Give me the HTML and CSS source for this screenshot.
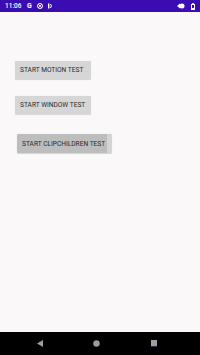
FILE: index.html
```html
<!DOCTYPE html>
<html lang="en">

<head>
  <meta charset="UTF-8" />
  <meta name="viewport" content="width=device-width, initial-scale=1.0" />
  <title>Transitions</title>
  <link rel="stylesheet" href="styles.css">
</head>

<body>
  <div class="screen">
    <header class="status-bar">
      <div class="status-left">
        <span class="clock">11:06</span>
        <span class="status-icon g-icon">G</span>
        <svg class="status-icon" width="6" height="6" viewBox="0 0 6 6">
          <circle cx="3" cy="3" r="2.5" fill="none" stroke="#fff" stroke-width="1" />
          <path d="M1 1 L5 5 M5 1 L1 5" stroke="#fff" stroke-width="0.8" />
        </svg>
        <svg class="status-icon" width="5" height="6" viewBox="0 0 5 6">
          <rect x="0" y="0.5" width="1.4" height="5" fill="#fff" />
          <path d="M2.4 1 Q4.6 3 2.4 5" fill="none" stroke="#fff" stroke-width="1" />
        </svg>
      </div>
      <div class="status-right">
        <svg width="8" height="6" viewBox="0 0 8 6">
          <path d="M0 3 L3 0.5 L3 5.5 Z" fill="#fff" />
          <circle cx="5" cy="3" r="2.5" fill="#fff" />
        </svg>
        <svg width="4" height="7" viewBox="0 0 4 7">
          <rect x="1.2" y="0" width="1.6" height="1" fill="#fff" />
          <rect x="0" y="1" width="4" height="6" fill="#fff" />
          <rect x="1" y="2" width="2" height="3" fill="#3a0cb2" />
        </svg>
      </div>
    </header>

    <main class="content">
      <button class="test-btn">Start Motion Test</button>
      <button class="test-btn">Start Window Test</button>
      <button class="test-btn clip">Start ClipChildren Test</button>
    </main>

    <footer class="nav-bar">
      <svg width="6" height="7" viewBox="0 0 6 7">
        <path d="M6 0 L6 7 L0 3.5 Z" fill="#9e9e9e" />
      </svg>
      <svg width="7" height="7" viewBox="0 0 7 7">
        <circle cx="3.5" cy="3.5" r="3.2" fill="#9e9e9e" />
      </svg>
      <svg width="6" height="7" viewBox="0 0 6 7">
        <rect x="0" y="0" width="6" height="6" fill="#9e9e9e" />
        <rect x="0" y="6" width="6" height="1" fill="#2a2a55" />
      </svg>
    </footer>
  </div>
</body>

</html>
```

FILE: styles.css
```css
body {
  margin: 0;
  font-family: Roboto, 'Liberation Sans', sans-serif;
  background-color: #fbf8f9;
}

.screen {
  width: 200px;
  height: 355px;
  display: flex;
  flex-direction: column;
}

/* status bar */
.status-bar {
  height: 12px;
  background-color: #3a0cb2;
  display: flex;
  justify-content: space-between;
  align-items: center;
  padding: 0 5px;
}

.status-left,
.status-right {
  display: flex;
  align-items: center;
  gap: 5px;
}

.status-right {
  gap: 6px;
}

.clock {
  color: #fff;
  font-size: 6.5px;
  font-weight: 500;
  width: 17px;
}

.g-icon {
  color: #fff;
  font-size: 7px;
  font-weight: 700;
  line-height: 1;
}

/* buttons */
.content {
  flex: 1;
  display: flex;
  flex-direction: column;
  align-items: flex-start;
  padding: 49px 0 0 15px;
}

.test-btn {
  width: 76px;
  height: 18px;
  padding: 0 0 0 5px;
  margin-bottom: 17px;
  border: none;
  border-radius: 1px;
  background-color: #d6d6d7;
  color: #2a2a2a;
  font-family: Roboto, 'Liberation Sans', sans-serif;
  font-size: 6.6px;
  font-weight: 400;
  text-align: left;
  text-transform: uppercase;
  white-space: nowrap;
  box-shadow: 0 0.5px 1px rgba(0, 0, 0, 0.15);
}

.test-btn.clip {
  margin-top: 3px;
  margin-left: 2px;
  width: 95px;
  height: 19px;
  background: linear-gradient(to right, #bdbdbe 0, #bdbdbe 90px, #d4d4d5 90px);
}

/* nav bar */
.nav-bar {
  height: 23px;
  background-color: #000;
  display: flex;
  justify-content: space-around;
  align-items: center;
  padding: 0 18px 0 12px;
}
```
